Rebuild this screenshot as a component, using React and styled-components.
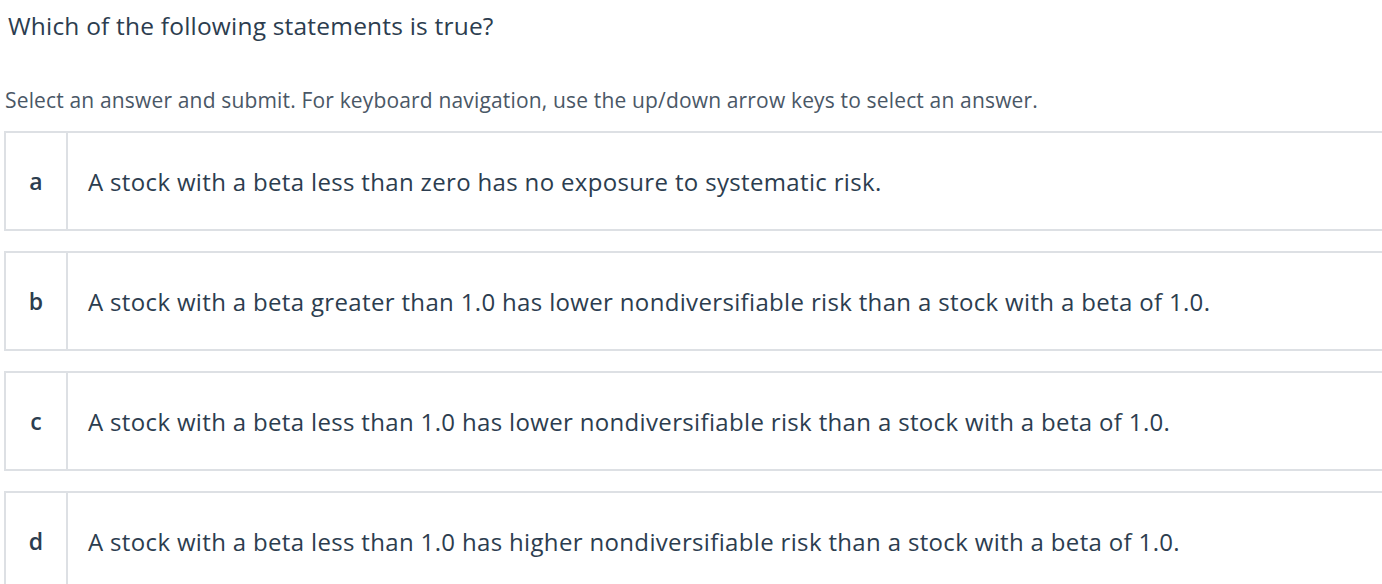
import React from 'react';
import styled, { createGlobalStyle } from 'styled-components';

const GlobalStyle = createGlobalStyle`
  body {
    margin: 0;
    background: #ffffff;
    font-family: "Open Sans", "Noto Sans", sans-serif;
    overflow: hidden;
  }
`

const options = [
  { key: 'a', text: 'A stock with a beta less than zero has no exposure to systematic risk.' },
  { key: 'b', text: 'A stock with a beta greater than 1.0 has lower nondiversifiable risk than a stock with a beta of 1.0.' },
  { key: 'c', text: 'A stock with a beta less than 1.0 has lower nondiversifiable risk than a stock with a beta of 1.0.' },
  { key: 'd', text: 'A stock with a beta less than 1.0 has higher nondiversifiable risk than a stock with a beta of 1.0.' },
]

const App = () => {
  return (
    <Page>
      <GlobalStyle />
      <Question>Which of the following statements is true?</Question>
      <Hint>Select an answer and submit. For keyboard navigation, use the up/down arrow keys to select an answer.</Hint>
      <AnswerList>
        {options.map(o => (
          <Answer key={o.key}>
            <Letter>{o.key}</Letter>
            <AnswerText>{o.text}</AnswerText>
          </Answer>
        ))}
      </AnswerList>
    </Page>
  )
}
export default App;

const Page = styled.div`
  width: 1400px;
  padding: 11px 0 0 4px;
`

const Question = styled.h1`
  margin: 0 0 0 4px;
  font-size: 24.5px;
  font-weight: 400;
  letter-spacing: 0.2px;
  line-height: 30px;
  color: #2c3d4f;
`

const Hint = styled.p`
  margin: 47px 0 0 1px;
  font-size: 21px;
  letter-spacing: 0.16px;
  line-height: 24px;
  color: #4a5766;
`

const AnswerList = styled.div`
  margin-top: 19px;
  display: flex;
  flex-direction: column;
  gap: 20px;
`

const Answer = styled.div`
  display: flex;
  align-items: stretch;
  height: 100px;
  box-sizing: border-box;
  border: 2px solid #dde0e4;
  background: #ffffff;
`

const Letter = styled.div`
  width: 60px;
  flex-shrink: 0;
  display: flex;
  align-items: center;
  justify-content: center;
  border-right: 2px solid #dde0e4;
  font-size: 23px;
  font-weight: 600;
  color: #2c3d4f;
`

const AnswerText = styled.div`
  display: flex;
  align-items: center;
  padding-left: 20px;
  font-size: 24px;
  letter-spacing: 0.34px;
  color: #2c3d4f;
`
